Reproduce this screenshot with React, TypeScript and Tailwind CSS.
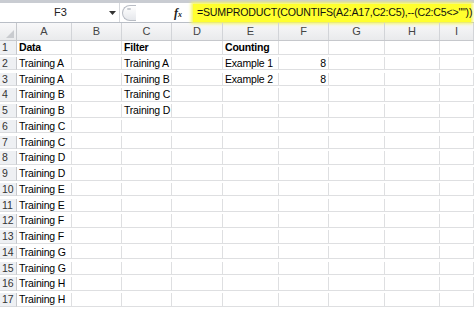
const cols = ["A", "B", "C", "D", "E", "F", "G", "H", "I"];

const widths = "grid-cols-[17px_55px_50px_50px_51px_56px_50px_56px_55px_1fr]";

type Cell = { text?: string; bold?: boolean; right?: boolean };

const data: Record<number, Record<string, Cell>> = {
  1: { A: { text: "Data", bold: true }, C: { text: "Filter", bold: true }, E: { text: "Counting", bold: true } },
  2: { A: { text: "Training A" }, C: { text: "Training A" }, E: { text: "Example 1" }, F: { text: "8", right: true } },
  3: { A: { text: "Training A" }, C: { text: "Training B" }, E: { text: "Example 2" }, F: { text: "8", right: true } },
  4: { A: { text: "Training B" }, C: { text: "Training C" } },
  5: { A: { text: "Training B" }, C: { text: "Training D" } },
  6: { A: { text: "Training C" } },
  7: { A: { text: "Training C" } },
  8: { A: { text: "Training D" } },
  9: { A: { text: "Training D" } },
  10: { A: { text: "Training E" } },
  11: { A: { text: "Training E" } },
  12: { A: { text: "Training F" } },
  13: { A: { text: "Training F" } },
  14: { A: { text: "Training G" } },
  15: { A: { text: "Training G" } },
  16: { A: { text: "Training H" } },
  17: { A: { text: "Training H" } },
};

export default function App() {
  const rows = Array.from({ length: 17 }, (_, i) => i + 1);

  return (
    <div
      className="w-[474px] h-[311px] overflow-hidden bg-white text-[10.5px] text-black"
      style={{ fontFamily: '"Liberation Sans", Arial, sans-serif' }}
    >
      {/* Formula bar */}
      <div className="h-[23px] border-t-[3px] border-[#c9ccd2] border-b border-b-[#b9bec6] bg-white flex">
        <div className="w-[120px] shrink-0 flex items-center border-r border-[#d7d9dd]">
          <span className="flex-1 text-center pl-[12px] text-[11px] text-[#222]">F3</span>
          <svg width="7" height="4" viewBox="0 0 7 4" className="mr-[3px]">
            <path d="M0 0h7L3.5 4z" fill="#333" />
          </svg>
        </div>
        <div className="w-[71px] shrink-0 flex items-center">
          <div className="ml-[2px] w-[14px] h-[16px] rounded-l-full border border-r-0 border-[#b8bcc4] bg-gradient-to-b from-white to-[#e6e8ec] flex items-start pl-[4px] pt-[2px]">
            <span className="block w-[4px] h-[2px] bg-[#c8ccd2] rounded-full" />
          </div>
          <span
            className="ml-auto mr-[9px] italic font-bold text-[12px] text-[#222]"
            style={{ fontFamily: '"Liberation Serif", serif' }}
          >
            f<span className="text-[8px]">x</span>
          </span>
        </div>
        <div className="flex-1 min-w-0 flex items-center pl-[2px] pr-[3px]">
          <div className="flex-1 min-w-0 h-[18px] flex items-center bg-[#ffff2e] shadow-[0_0_3px_2px_#f4f56a] pl-[4px] whitespace-nowrap text-[10.6px] tracking-[-0.2px] text-[#111]">
            =SUMPRODUCT(COUNTIFS(A2:A17,C2:C5),--(C2:C5&lt;&gt;""))
          </div>
        </div>
      </div>

      {/* Column headers */}
      <div className={`grid ${widths} h-[18px] bg-gradient-to-b from-[#f8f8f9] to-[#e9eaec] border-b border-[#c6c8cc]`}>
        <div className="border-r border-[#c6c8cc] flex items-end justify-end pr-[2px] pb-[2px]">
          <svg width="8" height="8" viewBox="0 0 8 8">
            <path d="M8 0v8H0z" fill="#c9cbcf" />
          </svg>
        </div>
        {cols.map((c) => (
          <div key={c} className="border-r border-[#d2d4d8] flex items-center justify-center text-[#444] text-[11px]">
            {c}
          </div>
        ))}
        <div />
      </div>

      {/* Rows */}
      {rows.map((r) => (
        <div key={r} className={`grid ${widths} h-[15.75px]`}>
          <div className="bg-[#eef0f3] border-r border-[#c6c8cc] border-b border-b-[#d9dbde] flex items-center pl-[2px] text-[#333] text-[10.5px] leading-none">
            {r}
          </div>
          {cols.map((c) => {
            const cell = data[r]?.[c];
            return (
              <div
                key={c}
                className={`border-r border-b border-[#dedfe1] flex items-center px-[2px] whitespace-nowrap tracking-[-0.2px] leading-none ${
                  cell?.right ? "justify-end" : ""
                } ${cell?.bold ? "font-bold" : ""}`}
              >
                {cell?.text}
              </div>
            );
          })}
          <div />
        </div>
      ))}
    </div>
  );
}
